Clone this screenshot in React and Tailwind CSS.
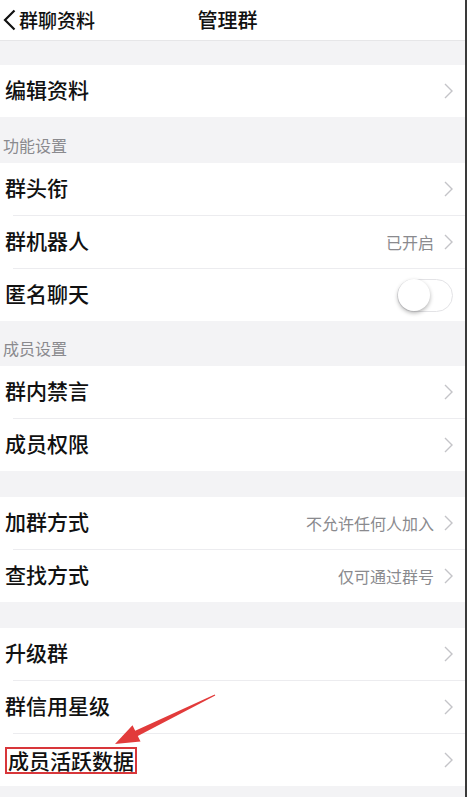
const Chevron = () => (
  <svg width="9" height="16" viewBox="0 0 9 16" className="shrink-0">
    <path d="M1 1l7 7-7 7" fill="none" stroke="#c4c4c8" strokeWidth="1.4" />
  </svg>
);

function Row({ label, value, toggle, boxed, divider }) {
  return (
    <div className="bg-white">
      <div className="h-[52px] flex items-center pl-[5px] pr-[12px]">
        {boxed ? (
          <span className="border-2 border-[#d8363a] px-[1px] leading-[23px] text-[21px] font-medium text-[#111]">
            {label}
          </span>
        ) : (
          <span className="text-[21px] font-medium text-[#111] -mt-[2px]">{label}</span>
        )}
        <div className="flex-1" />
        {value && <span className="text-[16px] text-[#8a8a8e] mr-[10px]">{value}</span>}
        {toggle ? (
          <div className="w-[56px] h-[33px] rounded-full border border-[#e3e3e6] bg-white flex items-center">
            <div className="w-[32px] h-[32px] rounded-full bg-white shadow-[0_2px_4px_rgba(0,0,0,0.3)]" />
          </div>
        ) : (
          <Chevron />
        )}
      </div>
      {divider && <div className="ml-[13px] h-px bg-[#ececef]" />}
    </div>
  );
}

function SectionLabel({ text, h }) {
  return (
    <div className={`${h} flex items-end pl-[3px] pb-[6px] text-[16px] text-[#8a8a8e]`}>{text}</div>
  );
}

export default function App() {
  return (
    <div className="relative w-[467px] h-[797px] overflow-hidden bg-[#f3f3f5] border-r-2 border-[#3a3a3a] font-['Noto_Sans_CJK_SC',sans-serif]">
      <div className="h-[41px] bg-white border-b border-[#e6e6e8] grid grid-cols-[1fr_auto_1fr] items-center">
        <div className="flex items-center pl-[3px]">
          <svg width="13" height="22" viewBox="0 0 13 22">
            <path d="M11.5 1.5L2 11l9.5 9.5" fill="none" stroke="#111" strokeWidth="2.2" />
          </svg>
          <span className="ml-[3px] text-[19px] font-medium text-[#111]">群聊资料</span>
        </div>
        <div className="text-[20px] font-medium text-[#111] pr-[10px]">管理群</div>
        <div />
      </div>

      <div className="h-[24px]" />
      <Row label="编辑资料" />

      <SectionLabel text="功能设置" h="h-[46px]" />
      <Row label="群头衔" divider />
      <Row label="群机器人" value="已开启" divider />
      <Row label="匿名聊天" toggle />

      <SectionLabel text="成员设置" h="h-[45px]" />
      <Row label="群内禁言" divider />
      <Row label="成员权限" />

      <div className="h-[26px]" />
      <Row label="加群方式" value="不允许任何人加入" divider />
      <Row label="查找方式" value="仅可通过群号" />

      <div className="h-[26px]" />
      <Row label="升级群" divider />
      <Row label="群信用星级" divider />
      <Row label="成员活跃数据" boxed />

      <svg className="absolute inset-0 pointer-events-none" width="467" height="797">
        <polygon
          points="115,744 132.5,725.3 135.2,730.7 214.7,694.5 215.3,695.5 137.8,736.1 140.5,741.5"
          fill="#e23b3b"
        />
      </svg>
    </div>
  );
}
